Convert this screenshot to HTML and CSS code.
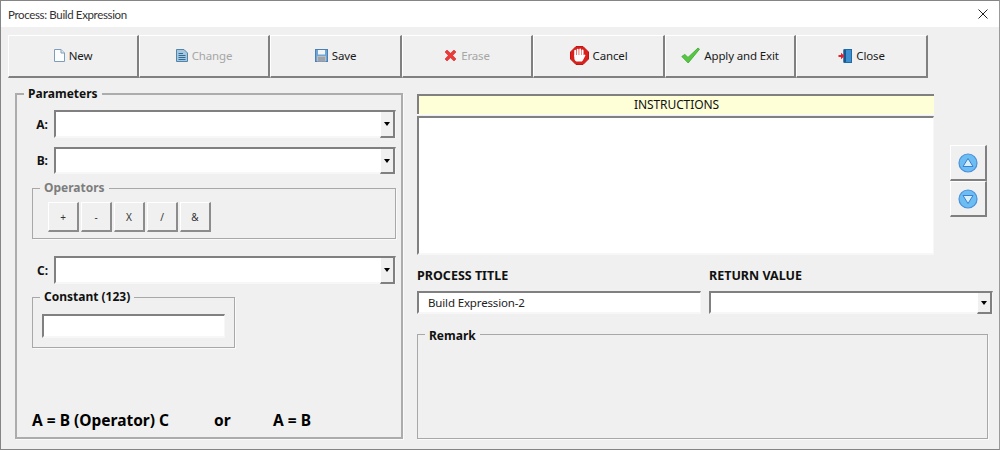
FILE: index.html
```html
<!DOCTYPE html>
<html lang="en">
<head>
<meta charset="utf-8">
<title>Process: Build Expression</title>
<link rel="stylesheet" href="styles.css">
</head>
<body>
<div class="window">
  <header class="titlebar">
    <span class="title">Process: Build Expression</span>
    <svg class="close-x" width="10" height="10" viewBox="0 0 10 10"><path d="M0.5 0.5L9.5 9.5M9.5 0.5L0.5 9.5" stroke="#222" stroke-width="1" fill="none"/></svg>
  </header>
  <div class="content">
    <div class="toolbar">
      <button class="tool w131">
        <svg width="11" height="13" viewBox="0 0 11 13"><path d="M0.5 0.5H7L10.5 4V12.5H0.5Z" fill="#fbfdff" stroke="#7f9db9"/><path d="M7 0.5V4H10.5" fill="#dce8f2" stroke="#7f9db9"/></svg>
        <span>New</span>
      </button>
      <button class="tool w131 off">
        <svg width="12" height="13" viewBox="0 0 12 13"><path d="M0.5 0.5H8L11.5 4V12.5H0.5Z" fill="#a9c6dc" stroke="#4f86ac"/><path d="M2.5 4.5H7M2.5 6.5H9.5M2.5 8.5H9.5M2.5 10.5H9.5" stroke="#2f6d99"/></svg>
        <span>Change</span>
      </button>
      <button class="tool w132">
        <svg width="13" height="13" viewBox="0 0 13 13"><rect x="0.5" y="0.5" width="12" height="12" fill="#6fa6d6" stroke="#4a80b5"/><rect x="3" y="1" width="7" height="4.5" fill="#f2f4f6"/><rect x="2" y="7" width="9" height="5.5" fill="#b9bcc0"/><path d="M3 9H10M3 11H10" stroke="#85888c"/></svg>
        <span>Save</span>
      </button>
      <button class="tool w131 off">
        <svg width="13" height="13" viewBox="0 0 13 13"><path d="M1 3L3 1L6.5 4.3L10 1L12 3L8.7 6.5L12 10L10 12L6.5 8.7L3 12L1 10L4.3 6.5Z" fill="#ec3a3a" stroke="#d32a2a" stroke-width="0.6"/></svg>
        <span>Erase</span>
      </button>
      <button class="tool w132">
        <svg width="19" height="19" viewBox="0 0 19 19"><path d="M6 0.5H13L18.5 6V13L13 18.5H6L0.5 13V6Z" fill="#d9201c" stroke="#c01512"/><path d="M5.2 4.8V10M7.7 3.6V10M10.2 3.4V10M12.6 4.4V10" stroke="#fff" stroke-width="1.9" stroke-linecap="round" fill="none"/><path d="M4.3 9H13.6L15 8.6L15.4 9.6L12.8 14.4A2.6 2.6 0 0 1 10.6 15.6H8A3.7 3.7 0 0 1 4.3 11.9Z" fill="#fff"/></svg>
        <span>Cancel</span>
      </button>
      <button class="tool w131 apply">
        <svg width="19" height="17" viewBox="0 0 19 17"><path d="M0.8 9.5L3.8 7.4L7 10.4L17 1L18.5 2.2L7.2 16Z" fill="#55c741" stroke="#3aa52e" stroke-width="0.8" stroke-linejoin="round"/></svg>
        <span>Apply and Exit</span>
      </button>
      <button class="tool w132">
        <svg width="14" height="14" viewBox="0 0 14 14"><rect x="6" y="0.5" width="7.5" height="13" fill="#3d8fd0" stroke="#1f6aa8"/><rect x="5.5" y="1" width="2.5" height="12" fill="#15588f"/><path d="M0.5 6H3V3.8L6.5 7L3 10.2V8H0.5Z" fill="#e8202a"/></svg>
        <span>Close</span>
      </button>
    </div>

    <div class="main">
      <fieldset class="group parameters">
        <legend class="legend">Parameters</legend>
        <div class="row row-a">
          <label class="row-label">A:</label>
          <div class="input combo h28"><span class="drop"><i class="caret"></i></span></div>
        </div>
        <div class="row row-b">
          <label class="row-label">B:</label>
          <div class="input combo h27"><span class="drop"><i class="caret"></i></span></div>
        </div>
        <fieldset class="group thin operators">
          <legend class="legend muted">Operators</legend>
          <div class="ops">
            <button class="op">+</button>
            <button class="op">-</button>
            <button class="op">X</button>
            <button class="op">/</button>
            <button class="op">&amp;</button>
          </div>
        </fieldset>
        <div class="row row-c">
          <label class="row-label">C:</label>
          <div class="input combo h28"><span class="drop"><i class="caret"></i></span></div>
        </div>
        <fieldset class="group thin constant">
          <legend class="legend">Constant (123)</legend>
          <div class="input const-input"></div>
        </fieldset>
        <div class="formula">
          <span class="f1">A = B (Operator) C</span>
          <span class="f2">or</span>
          <span class="f3">A = B</span>
        </div>
      </fieldset>

      <div class="right">
        <div class="right-top">
          <div class="instructions">
            <div class="instr-head">INSTRUCTIONS</div>
            <div class="input instr-body"></div>
          </div>
          <div class="arrows">
            <button class="arrow">
              <svg width="20" height="20" viewBox="0 0 20 20"><circle cx="10" cy="10" r="9" fill="#6cbdf2" stroke="#4a90dc" stroke-width="1.2"/><path d="M10 5.5L15 13.5H5Z" fill="#d9effc" stroke="#3f7fd0"/></svg>
            </button>
            <button class="arrow">
              <svg width="20" height="20" viewBox="0 0 20 20"><circle cx="10" cy="10" r="9" fill="#6cbdf2" stroke="#4a90dc" stroke-width="1.2"/><path d="M10 14.5L15 6.5H5Z" fill="#d9effc" stroke="#3f7fd0"/></svg>
            </button>
          </div>
        </div>
        <div class="fields">
          <div class="field">
            <div class="field-label">PROCESS TITLE</div>
            <div class="input h23 title-input">Build Expression-2</div>
          </div>
          <div class="field">
            <div class="field-label">RETURN VALUE</div>
            <div class="input combo h23"><span class="drop"><i class="caret"></i></span></div>
          </div>
        </div>
        <fieldset class="group thin remark">
          <legend class="legend remark-legend">Remark</legend>
        </fieldset>
      </div>
    </div>
  </div>
</div>
</body>
</html>
```

FILE: styles.css
```css
* { box-sizing: border-box; }
html, body { margin: 0; padding: 0; }
body {
  width: 1000px;
  height: 450px;
  overflow: hidden;
  font-family: "Noto Sans", "Liberation Sans", sans-serif;
  font-size: 12px;
  color: #1a1a1a;
  background: #f0f0f0;
}
button { font: inherit; color: inherit; margin: 0; padding: 0; background: #f0f0f0; }

.window {
  width: 1000px;
  height: 450px;
  border: 1px solid #858585;
  border-right-color: #9a9a9a;
  display: flex;
  flex-direction: column;
  background: #f0f0f0;
}
.titlebar {
  height: 26px;
  flex: none;
  background: #fff;
  display: flex;
  align-items: center;
  justify-content: space-between;
  padding: 0 7px 0 7px;
}
.title { font-family: "Lato", "Noto Sans", sans-serif; font-size: 11.5px; letter-spacing: -0.35px; color: #333; }
.close-x { margin-right: 4px; }

.content { padding: 8px 0 0 7px; flex: 1; }

.toolbar { display: flex; height: 43px; }
.tool {
  height: 43px;
  display: flex;
  align-items: center;
  justify-content: center;
  gap: 4px;
  padding-bottom: 1px;
  font-size: 11.5px;
  letter-spacing: -0.15px;
  border: 0;
  border-top: 1px solid #fff;
  border-left: 1px solid #fff;
  border-right: 2px solid #808080;
  border-bottom: 2px solid #808080;
}
.w131 { width: 131px; }
.w132 { width: 132px; }
.off { color: #a6a6a6; }

.main { display: flex; margin-top: 9px; align-items: flex-start; }

.group {
  margin: 0;
  padding: 0;
  min-width: 0;
  border: 1px solid #a8a8a8;
  box-shadow: 1px 1px 0 #fafafa;
}
.legend {
  font-weight: 700;
  line-height: 14px;
  padding: 0 4px;
  margin-left: 7px;
  color: #111;
}
.muted { color: #7d7d7d; }
.remark-legend { padding-top: 4px; }

.parameters {
  width: 388px;
  height: 352px;
  margin-left: 7px;
  border: 2px solid #acacac;
}
.row { display: flex; align-items: center; margin-left: 14px; }
.row-label { width: 18px; font-weight: 700; text-align: right; margin-right: 5px; padding-right: 1px; color: #111; }
.row-a { margin-top: 9px; }
.row-b { margin-top: 9px; }
.row-c { margin-top: 17px; }
.row .input { width: 342px; }

.input {
  background: #fff;
  border-top: 2px solid #808080;
  border-left: 2px solid #808080;
  border-right: 1px solid #f7f7f7;
  border-bottom: 2px solid #f7f7f7;
}
.combo { position: relative; }
.h28 { height: 28px; }
.h27 { height: 27px; }
.h23 { height: 23px; }

.drop {
  position: absolute;
  top: 0;
  right: 0;
  bottom: -2px;
  width: 15px;
  background: #f0f0f0;
  border-right: 2px solid #808080;
  border-bottom: 2px solid #808080;
  border-left: 1px solid #fff;
  display: flex;
  align-items: center;
  justify-content: center;
}
.caret {
  width: 0;
  height: 0;
  border-left: 3.5px solid transparent;
  border-right: 3.5px solid transparent;
  border-top: 4px solid #000;
}

.operators {
  width: 364px;
  height: 58px;
  margin: 7px 0 0 15px;
}
.ops { display: flex; gap: 2px; padding: 7px 0 0 15px; }
.op {
  width: 31px;
  height: 30px;
  font-size: 10px;
  color: #333;
  border: 0;
  border-top: 1px solid #fff;
  border-left: 1px solid #fff;
  border-right: 2px solid #8c8c8c;
  border-bottom: 2px solid #8c8c8c;
}

.constant {
  width: 203px;
  height: 58px;
  margin: 6px 0 0 15px;
}
.const-input { width: 183px; height: 24px; margin: 10px 0 0 9px; }

.formula {
  display: flex;
  margin: 62px 0 0 15px;
  font-size: 15.5px;
  font-weight: 700;
  line-height: 20px;
  color: #000;
}
.f1 { width: 182px; }
.f2 { width: 59px; }

.right { width: 576px; margin: 7px 0 0 14px; }
.right-top { display: flex; align-items: flex-start; }
.instructions { width: 517px; }
.instr-head {
  height: 20px;
  background: #ffffd7;
  border-top: 2px solid #808080;
  border-left: 2px solid #808080;
  text-align: center;
  line-height: 18px;
  letter-spacing: -0.1px;
  color: #111;
  box-shadow: 0 1px 0 #fafafa;
}
.instr-body { height: 139px; margin-top: 2px; }
.arrows { margin: 51px 0 0 16px; display: flex; flex-direction: column; }
.arrow {
  width: 37px;
  height: 36px;
  display: flex;
  align-items: center;
  justify-content: center;
  border: 0;
  border-top: 1px solid #fff;
  border-left: 1px solid #fff;
  border-right: 2px solid #808080;
  border-bottom: 2px solid #808080;
}

.fields { display: grid; grid-template-columns: 284px 284px; gap: 8px; margin-top: 13px; }
.field-label { font-size: 12.5px; font-weight: 700; line-height: 16px; margin-bottom: 7px; color: #111; }
.title-input { padding-left: 9px; line-height: 19px; font-size: 11.5px; letter-spacing: -0.15px; color: #222; }

.remark {
  width: 571px;
  height: 114px;
  margin-top: 11px;
}
```
